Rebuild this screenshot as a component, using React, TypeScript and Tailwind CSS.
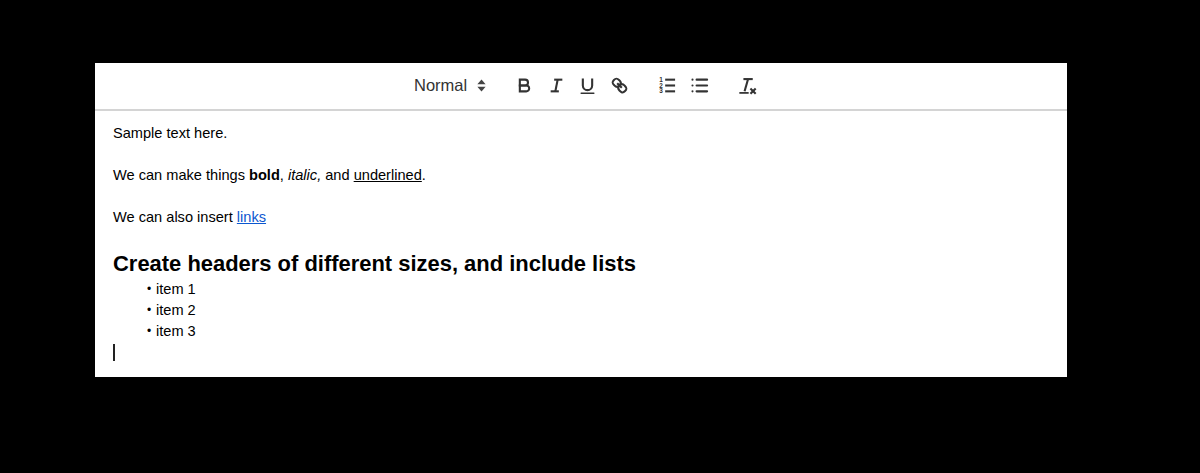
const iconClass = "h-[21px] w-[21px] fill-none stroke-[#333] stroke-[1.8]";

function BoldIcon() {
  return (
    <svg viewBox="0 0 18 18" className={iconClass}>
      <path d="M5,4H9.5A2.5,2.5,0,0,1,12,6.5v0A2.5,2.5,0,0,1,9.5,9H5V4Z" />
      <path d="M5,9h5.5A2.5,2.5,0,0,1,13,11.5v0A2.5,2.5,0,0,1,10.5,14H5V9Z" />
    </svg>
  );
}

function ItalicIcon() {
  return (
    <svg viewBox="0 0 18 18" className={iconClass}>
      <line x1="7" x2="14" y1="4" y2="4" />
      <line x1="4" x2="11" y1="14" y2="14" />
      <line x1="8" x2="10" y1="14" y2="4" />
    </svg>
  );
}

function UnderlineIcon() {
  return (
    <svg viewBox="0 0 18 18" className={iconClass}>
      <path d="M5,3V9a4.012,4.012,0,0,0,4,4H9a4.012,4.012,0,0,0,4-4V3" />
      <rect x="3" y="15" width="12" height="1.2" rx="0.5" className="fill-[#333] stroke-none" />
    </svg>
  );
}

function LinkIcon() {
  return (
    <svg viewBox="0 0 18 18" className={iconClass}>
      <line x1="7" x2="11" y1="7" y2="11" />
      <path d="M8.9,4.577a3.476,3.476,0,0,1,.36,4.679A3.476,3.476,0,0,1,4.577,8.9C3.185,7.5,2.035,6.4,4.217,4.217S7.5,3.185,8.9,4.577Z" />
      <path d="M13.423,9.1a3.476,3.476,0,0,0-4.679-.36,3.476,3.476,0,0,0,.36,4.679c1.392,1.392,2.5,2.542,4.679.36S14.815,10.5,13.423,9.1Z" />
    </svg>
  );
}

function OrderedIcon() {
  return (
    <svg viewBox="0 0 18 18" className={iconClass}>
      <line x1="7" x2="15.5" y1="4" y2="4" />
      <line x1="7" x2="15.5" y1="9" y2="9" />
      <line x1="7" x2="15.5" y1="14" y2="14" />
      <g className="fill-[#333] stroke-none font-bold text-[5.5px]" fontFamily="'Liberation Sans', sans-serif">
        <text x="2" y="5.8">1</text>
        <text x="2" y="10.8">2</text>
        <text x="2" y="15.8">3</text>
      </g>
    </svg>
  );
}

function BulletIcon() {
  return (
    <svg viewBox="0 0 18 18" className={iconClass} strokeLinecap="round">
      <line x1="6.5" x2="15.5" y1="4" y2="4" />
      <line x1="6.5" x2="15.5" y1="9" y2="9" />
      <line x1="6.5" x2="15.5" y1="14" y2="14" />
      <line x1="3" x2="3" y1="4" y2="4" />
      <line x1="3" x2="3" y1="9" y2="9" />
      <line x1="3" x2="3" y1="14" y2="14" />
    </svg>
  );
}

function CleanIcon() {
  return (
    <svg viewBox="0 0 18 18" className={iconClass}>
      <line x1="5.5" x2="13.5" y1="3.5" y2="3.5" />
      <line x1="6.5" x2="9.5" y1="14" y2="3.5" />
      <line x1="11.5" x2="16" y1="11.5" y2="16" />
      <line x1="16" x2="11.5" y1="11.5" y2="16" />
      <rect x="2" y="14.6" width="8" height="1.5" className="fill-[#333] stroke-none" />
    </svg>
  );
}

function ToolButton({ children }: { children: React.ReactNode }) {
  return <button className="flex h-[32px] w-[31.5px] items-center justify-center">{children}</button>;
}

export default function App() {
  return (
    <div className="h-[473px] w-[1200px] bg-black pt-[63px] pl-[95px] font-['Liberation_Sans',sans-serif]">
      <div className="flex h-[314px] w-[972px] flex-col bg-white">
        {/* Toolbar */}
        <div className="flex h-[48px] items-center border-b-2 border-[#d4d4d4] pl-[319px] pb-[2px]">
          <span className="text-[16.5px] text-[#333]">Normal</span>
          <svg viewBox="0 0 8 12" className="ml-[10px] h-[13px] w-[9px] fill-[#444]">
            <path d="M4 0.5 L7.8 4.8 H0.2 Z" />
            <path d="M4 11.5 L7.8 7.2 H0.2 Z" />
          </svg>
          <div className="ml-[23px] flex">
            <ToolButton><BoldIcon /></ToolButton>
            <ToolButton><ItalicIcon /></ToolButton>
            <ToolButton><UnderlineIcon /></ToolButton>
            <ToolButton><LinkIcon /></ToolButton>
          </div>
          <div className="ml-[17px] flex">
            <ToolButton><OrderedIcon /></ToolButton>
            <ToolButton><BulletIcon /></ToolButton>
          </div>
          <div className="ml-[17px] flex">
            <ToolButton><CleanIcon /></ToolButton>
          </div>
        </div>

        {/* Editor */}
        <div className="pt-[12px] pl-[18px] text-[14.6px] leading-[21px] text-black">
          <p>Sample text here.</p>
          <p className="mt-[21px]">
            We can make things <strong>bold</strong>, <em>italic,</em> and <u>underlined</u>.
          </p>
          <p className="mt-[21px]">
            We can also insert <a className="text-[#0b57d0] underline">links</a>
          </p>
          <h2 className="mt-[21px] text-[21.95px] leading-[30px] font-bold">
            Create headers of different sizes, and include lists
          </h2>
          <ul className="pl-[34px]">
            <li className="flex items-center"><span className="w-[9px] text-[12px]">•</span>item 1</li>
            <li className="flex items-center"><span className="w-[9px] text-[12px]">•</span>item 2</li>
            <li className="flex items-center"><span className="w-[9px] text-[12px]">•</span>item 3</li>
          </ul>
          <div className="mt-[2px] h-[17px] w-[1.5px] bg-[#222]" />
        </div>
      </div>
    </div>
  );
}
